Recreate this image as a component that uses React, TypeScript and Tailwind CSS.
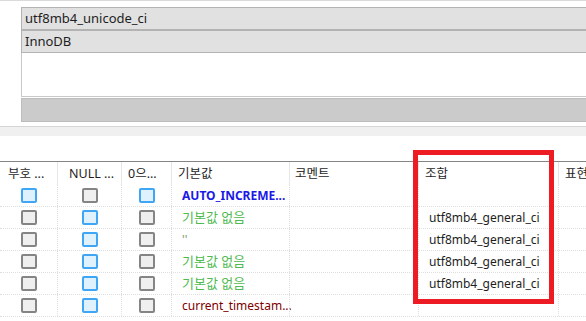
import React from 'react';

type Box = 'blue' | 'gray';

type Row = {
  checks: [Box, Box, Box];
  def: string;
  defClass: string;
  collation: string;
};

const rows: Row[] = [
  { checks: ['blue', 'gray', 'blue'], def: 'AUTO_INCREME...', defClass: 'text-[12px] font-bold text-[#1a1ae6]', collation: '' },
  { checks: ['gray', 'blue', 'gray'], def: '기본값 없음', defClass: 'text-[13px] text-[#4fba4f]', collation: 'utf8mb4_general_ci' },
  { checks: ['gray', 'blue', 'gray'], def: "''", defClass: 'text-[12px] text-[#7a9a7a]', collation: 'utf8mb4_general_ci' },
  { checks: ['gray', 'blue', 'gray'], def: '기본값 없음', defClass: 'text-[13px] text-[#4fba4f]', collation: 'utf8mb4_general_ci' },
  { checks: ['gray', 'blue', 'gray'], def: '기본값 없음', defClass: 'text-[13px] text-[#4fba4f]', collation: 'utf8mb4_general_ci' },
  { checks: ['gray', 'blue', 'gray'], def: 'current_timestam...', defClass: 'text-[12px] text-[#800000]', collation: '' },
];

function Check({ kind }: { kind: Box }) {
  return kind === 'blue' ? (
    <span className="block shrink-0 w-[16px] h-[15px] rounded-[2px] border-2 border-[#3ea6f5] bg-[#dff1fc]" />
  ) : (
    <span className="block shrink-0 w-[16px] h-[15px] rounded-[2px] border-2 border-[#858585] bg-[#efefef]" />
  );
}

const cols = 'grid grid-cols-[57px_64px_50px_118px_129px_140px_1fr]';

export default function App() {
  return (
    <div
      className="relative w-[586px] h-[321px] overflow-hidden bg-white text-[#1e1e1e]"
      style={{ fontFamily: '"Noto Sans", "Noto Sans CJK KR", sans-serif' }}
    >
      <div className="h-px bg-[#dadada]" />

      <div className="pl-[21px] pt-[6px]">
        <div className="h-[23px] border-y border-l border-[#b3b3b3] bg-[#e1e1e1] px-[3px] text-[13px] leading-[21px]">
          utf8mb4_unicode_ci
        </div>
        <div className="h-[23px] border-y border-l border-[#b3b3b3] bg-[#e1e1e1] px-[3px] text-[13px] leading-[21px]">
          InnoDB
        </div>
        <div className="h-[44px] border-b border-l border-[#c8c8c8] bg-white" />
        <div className="mt-px h-[24px] border-y border-l border-[#bdbdbd] bg-[#cbcbcb]" />
      </div>

      <div className="mt-[4px] h-[10px] border-t border-[#d6d6d6] bg-[#f0f0f0]" />

      <div className="mt-[25px] border-t border-[#858585]">
        <div className={`${cols} h-[23px] text-[12.5px] leading-[23px] whitespace-nowrap`}>
          <div className="pl-[8px]">부호 ...</div>
          <div className="border-l border-[#e6e6e6] pl-[11px]">NULL ...</div>
          <div className="border-l border-[#e6e6e6] pl-[6px]">0으...</div>
          <div className="border-l border-[#e6e6e6] pl-[6px]">기본값</div>
          <div className="border-l border-[#e6e6e6] pl-[5px]">코멘트</div>
          <div className="border-l border-[#e6e6e6] pl-[6px]">조합</div>
          <div className="border-l border-[#e6e6e6] pl-[6px]">표현</div>
        </div>

        {rows.map((r, i) => (
          <div key={i} className={`${cols} h-[22px] border-b border-dotted border-[#dedede] leading-[21px] whitespace-nowrap`}>
            <div className="flex items-center justify-center pl-[1px]">
              <Check kind={r.checks[0]} />
            </div>
            <div className="flex items-center justify-center border-l border-dotted border-[#dedede]">
              <Check kind={r.checks[1]} />
            </div>
            <div className="flex items-center justify-center border-l border-dotted border-[#dedede]">
              <Check kind={r.checks[2]} />
            </div>
            <div className={`border-l border-dotted border-[#dedede] pl-[10px] ${r.defClass}`}>{r.def}</div>
            <div className="border-l border-dotted border-[#dedede]" />
            <div className="border-l border-dotted border-[#dedede] pl-[10px] text-[12px]">{r.collation}</div>
            <div className="border-l border-dotted border-[#dedede]" />
          </div>
        ))}
      </div>

      <div className="absolute left-[413px] top-[150px] w-[141px] h-[154px] border-[5px] border-[#ed1c24]" />
    </div>
  );
}
